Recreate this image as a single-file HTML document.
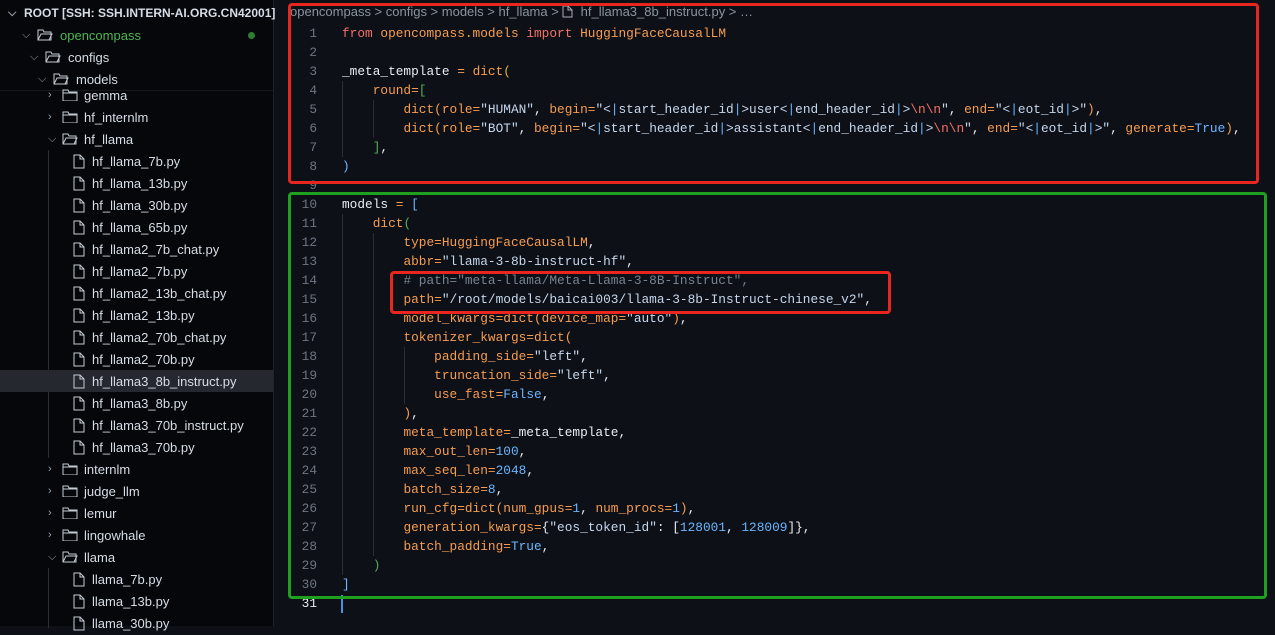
<!DOCTYPE html>
<html><head><meta charset="utf-8"><style>
body{margin:0;width:1275px;height:626px;overflow:hidden;background:#0d1017;font-family:"Liberation Sans",sans-serif;position:relative}
#side{position:absolute;left:0;top:0;width:273px;height:626px;background:#05070b;border-right:1px solid #1f242c}
.r{position:absolute;left:0;width:273px;height:22px;line-height:23px;color:#d6dde6;font-size:13px;white-space:nowrap}
.r.sel{background:#25282e}
.ch{position:absolute;top:0;font-size:11px;color:#9aa3ad}
.ic{position:absolute;top:5px}
.t{position:absolute;top:0}
pre{margin:0;position:absolute;left:342px;top:23.5px;font-family:"Liberation Mono",monospace;font-size:12.8px;line-height:19.03px;color:#e6edf3}
.ln{position:absolute;left:290px;width:27px;text-align:right;top:23.5px;font-family:"Liberation Mono",monospace;font-size:12.8px;line-height:19.03px;color:#6e7681;margin:0}
.k{color:#f47067}.o{color:#f69d50}.s{color:#c6d7ec}.b{color:#6cb6ff}.c{color:#768390}.g{color:#57ab5a}.y{color:#e0b030}.n{color:#f47067}
.box{position:absolute;border:3px solid;border-radius:4px;box-sizing:border-box}
.ig{position:absolute;width:1px;background:#2a2f36}
</style></head><body>
<div id="side">
<div class="r" style="top:2px;font-weight:bold;font-size:12px"><span class="ch" style="left:8px">⌵</span><span class="t" style="left:24px">ROOT [SSH: SSH.INTERN-AI.ORG.CN42001]</span></div>
<div class="r" style="top:24px"><span class="ch" style="left:22px">⌵</span><svg class="ic" style="left:37px" width="16" height="12"><path d="M1 1h5l1 2h7v8H1z M1 11l3-6h11l-3 6" fill="none" stroke="#c5ccd4"/></svg><span class="t" style="left:60px;color:#4fb54f">opencompass</span><span style="position:absolute;left:248px;top:8px;width:7px;height:7px;border-radius:50%;background:#2f7d32"></span></div>
<div class="r" style="top:46px"><span class="ch" style="left:30px">⌵</span><svg class="ic" style="left:45px" width="16" height="12"><path d="M1 1h5l1 2h7v8H1z M1 11l3-6h11l-3 6" fill="none" stroke="#c5ccd4"/></svg><span class="t" style="left:68px">configs</span></div>
<div class="r" style="top:68px;border-bottom:1px solid #15181d"><span class="ch" style="left:38px">⌵</span><svg class="ic" style="left:53px" width="16" height="12"><path d="M1 1h5l1 2h7v8H1z M1 11l3-6h11l-3 6" fill="none" stroke="#c5ccd4"/></svg><span class="t" style="left:76px">models</span></div>
<div style="position:absolute;left:48px;top:150px;width:1px;height:308px;background:#2a2f36"></div>
<div style="position:absolute;left:48px;top:568px;width:1px;height:60px;background:#2a2f36"></div>
<div id="rows"></div>
</div>
<script>
var rows=[[95,'f','gemma'],[117,'f','hf_internlm'],[139,'o','hf_llama'],[161,'p','hf_llama_7b.py'],[183,'p','hf_llama_13b.py'],[205,'p','hf_llama_30b.py'],[227,'p','hf_llama_65b.py'],[249,'p','hf_llama2_7b_chat.py'],[271,'p','hf_llama2_7b.py'],[293,'p','hf_llama2_13b_chat.py'],[315,'p','hf_llama2_13b.py'],[337,'p','hf_llama2_70b_chat.py'],[359,'p','hf_llama2_70b.py'],[381,'p','hf_llama3_8b_instruct.py'],[403,'p','hf_llama3_8b.py'],[425,'p','hf_llama3_70b_instruct.py'],[447,'p','hf_llama3_70b.py'],[469,'f','internlm'],[491,'f','judge_llm'],[513,'f','lemur'],[535,'f','lingowhale'],[557,'o','llama'],[579,'p','llama_7b.py'],[601,'p','llama_13b.py'],[623,'p','llama_30b.py']];
var h='';rows.forEach(function(r){var y=r[0]-11;var sel=r[2]=='hf_llama3_8b_instruct.py'?' sel':'';
if(r[1]=='p'){h+='<div class="r'+sel+'" style="top:'+y+'px"><svg class="ic" style="left:73px;top:4px" width="12" height="15"><path d="M1 1h6l4 4v9H1z M7 1v4h4" fill="none" stroke="#c5ccd4"/></svg><span class="t" style="left:92px">'+r[2]+'</span></div>';}
else{var icon=r[1]=='o'?'<path d="M1 1h5l1 2h7v8H1z M1 11l3-6h11l-3 6" fill="none" stroke="#c5ccd4"/>':'<path d="M1 1h5l1 2h8v9H1z M1 4h14" fill="none" stroke="#c5ccd4"/>';
h+='<div class="r" style="top:'+y+'px"><span class="ch" style="left:48px">'+(r[1]=='o'?'⌵':'›')+'</span><svg class="ic" style="left:62px" width="16" height="12">'+icon+'</svg><span class="t" style="left:84px">'+r[2]+'</span></div>';}});
document.getElementById('rows').innerHTML=h;
</script>
<div style="position:absolute;left:274px;top:0;right:0;height:24px;line-height:24px;font-size:13px;color:#8b949e;padding-left:16px">opencompass &gt; configs &gt; models &gt; hf_llama &gt; <svg width="11" height="13" style="vertical-align:-2px"><path d="M1 1h5l4 4v7H1z M6 1v4h4" fill="none" stroke="#aab"/></svg>&nbsp; hf_llama3_8b_instruct.py &gt; …</div>
<div class="ig" style="left:342px;top:81px;height:76px"></div>
<div class="ig" style="left:373px;top:100px;height:38px"></div>
<div class="ig" style="left:342px;top:214px;height:361px"></div>
<div class="ig" style="left:373px;top:233px;height:323px"></div>
<div class="ig" style="left:404px;top:347px;height:57px"></div>
<pre class="ln">1
2
3
4
5
6
7
8
9
10
11
12
13
14
15
16
17
18
19
20
21
22
23
24
25
26
27
28
29
30
<span style="color:#e6edf3">31</span></pre>
<pre><span class="k">from</span> <span class="o">opencompass.models</span> <span class="k">import</span> <span class="o">HuggingFaceCausalLM</span>

_meta_template <span class="o">=</span> <span class="o">dict</span><span class="y">(</span>
    <span class="o">round=</span><span class="g">[</span>
        <span class="o">dict(role=</span><span class="s">"HUMAN"</span>, <span class="o">begin=</span><span class="s">"&lt;<span class="b">|</span>start_header_id<span class="b">|</span>&gt;user&lt;<span class="b">|</span>end_header_id<span class="b">|</span>&gt;<span class="n">\n\n</span>"</span>, <span class="o">end=</span><span class="s">"&lt;<span class="b">|</span>eot_id<span class="b">|</span>&gt;"</span><span class="o">)</span>,
        <span class="o">dict(role=</span><span class="s">"BOT"</span>, <span class="o">begin=</span><span class="s">"&lt;<span class="b">|</span>start_header_id<span class="b">|</span>&gt;assistant&lt;<span class="b">|</span>end_header_id<span class="b">|</span>&gt;<span class="n">\n\n</span>"</span>, <span class="o">end=</span><span class="s">"&lt;<span class="b">|</span>eot_id<span class="b">|</span>&gt;"</span>, <span class="o">generate=</span><span class="b">True</span><span class="o">)</span>,
    <span class="g">]</span>,
<span class="b">)</span>

models <span class="o">=</span> <span class="b">[</span>
    <span class="o">dict</span><span class="g">(</span>
        <span class="o">type=HuggingFaceCausalLM</span>,
        <span class="o">abbr=</span><span class="s">"llama-3-8b-instruct-hf"</span>,
        <span class="c"># path="meta-llama/Meta-Llama-3-8B-Instruct",</span>
        <span class="o">path=</span><span class="s">"/root/models/baicai003/llama-3-8b-Instruct-chinese_v2"</span>,
        <span class="o">model_kwargs=dict(device_map=</span><span class="s">"auto"</span><span class="o">)</span>,
        <span class="o">tokenizer_kwargs=dict(</span>
            <span class="o">padding_side=</span><span class="s">"left"</span>,
            <span class="o">truncation_side=</span><span class="s">"left"</span>,
            <span class="o">use_fast=</span><span class="b">False</span>,
        <span class="o">)</span>,
        <span class="o">meta_template=</span>_meta_template,
        <span class="o">max_out_len=</span><span class="b">100</span>,
        <span class="o">max_seq_len=</span><span class="b">2048</span>,
        <span class="o">batch_size=</span><span class="b">8</span>,
        <span class="o">run_cfg=dict(num_gpus=</span><span class="b">1</span>, <span class="o">num_procs=</span><span class="b">1</span><span class="o">)</span>,
        <span class="o">generation_kwargs=</span>{<span class="s">"eos_token_id"</span>: [<span class="b">128001</span>, <span class="b">128009</span>]},
        <span class="o">batch_padding=</span><span class="b">True</span>,
    <span class="g">)</span>
<span class="b">]</span>
</pre>
<div style="position:absolute;left:341px;top:595px;width:2px;height:18px;background:#4c8fe0"></div>
<div class="box" style="left:288px;top:3px;width:971px;height:181px;border-color:#e8261f"></div>
<div class="box" style="left:288px;top:192px;width:979px;height:407px;border-color:#1fa01f"></div>
<div class="box" style="left:390px;top:271px;width:501px;height:43px;border-color:#e8261f"></div>
</body></html>
